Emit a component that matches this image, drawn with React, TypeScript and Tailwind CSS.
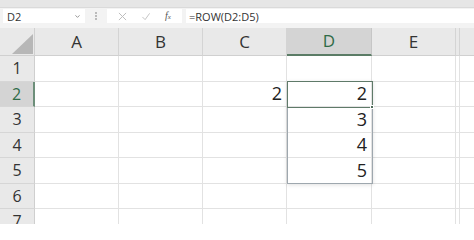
import { ChevronDown } from 'lucide-react';

const COLS = ['A', 'B', 'C', 'D', 'E'];
const ROWS = [1, 2, 3, 4, 5, 6, 7];

// values by "col+row"
const CELLS: Record<string, string> = {
  C2: '2',
  D2: '2',
  D3: '3',
  D4: '4',
  D5: '5',
};

const font = { fontFamily: '"Open Sans", "Noto Sans", sans-serif' };

function FormulaBar() {
  return (
    <div className="h-[20px] bg-[#f3f3f3] flex items-start pt-[1px]">
      <div className="ml-[3px] w-[82px] h-[14px] bg-white flex items-center justify-between px-[4px]">
        <span className="text-[11px] text-[#333] leading-none">D2</span>
        <ChevronDown size={7} strokeWidth={3} className="text-[#888]" />
      </div>
      <div className="w-[22px] h-[14px] flex flex-col items-center justify-center gap-[1.5px]">
        <span className="w-[1.5px] h-[1.5px] bg-[#bbb]" />
        <span className="w-[1.5px] h-[1.5px] bg-[#bbb]" />
        <span className="w-[1.5px] h-[1.5px] bg-[#bbb]" />
      </div>
      <div className="w-[75px] h-[14px] bg-white flex items-center justify-around px-[4px]">
        <svg width="9" height="9" viewBox="0 0 10 10" className="text-[#bdbdbd]">
          <path d="M1 1 L9 9 M9 1 L1 9" stroke="currentColor" strokeWidth="1.1" fill="none" />
        </svg>
        <svg width="10" height="9" viewBox="0 0 10 10" className="text-[#c4c4c4]">
          <path d="M1 5.5 L4 8.5 L9 1.5" stroke="currentColor" strokeWidth="1.1" fill="none" />
        </svg>
        <span className="text-[10px] italic text-[#555] leading-none" style={{ fontFamily: '"Liberation Serif", serif' }}>
          f<span className="text-[7px]">x</span>
        </span>
      </div>
      <div className="ml-[4px] flex-1 h-[14px] bg-white flex items-center pl-[3px]">
        <span className="text-[11px] text-[#333] leading-none">=ROW(D2:D5)</span>
      </div>
    </div>
  );
}

export default function App() {
  return (
    <div className="w-[474px] h-[224px] overflow-hidden bg-white relative" style={font}>
      <div className="h-[8px] bg-[#e6e6e6] border-b border-[#dadada]" />
      <FormulaBar />

      <div className="grid grid-cols-[35px_84px_84px_84px_85px_84px_4px_1fr] grid-rows-[28px_repeat(7,25.5px)]">
        {/* corner */}
        <div className="bg-[#e9e9e9] border-r border-b border-[#d0d0d0] relative">
          <svg width="21" height="20" viewBox="0 0 21 20" className="absolute left-[12px] top-[6px]">
            <path d="M21 0 L21 20 L0 20 Z" fill="#b7b7b7" />
          </svg>
        </div>
        {COLS.map(c => {
          const sel = c === 'D';
          return (
            <div
              key={c}
              className={`flex items-center justify-center text-[17px] border-r ${
                sel
                  ? 'bg-[#d4d4d4] text-[#2f6b47] border-[#c6c6c6] border-b-2 border-b-[#5b7c66]'
                  : 'bg-[#e9e9e9] text-[#333] border-[#d4d4d4] border-b border-b-[#d0d0d0]'
              }`}
            >
              {c}
            </div>
          );
        })}
        <div className="bg-[#e9e9e9] border-r border-b border-[#d4d4d4]" />
        <div className="bg-[#e9e9e9] border-b border-[#d0d0d0]" />

        {ROWS.map(r => {
          const sel = r === 2;
          return [
            <div
              key={`h${r}`}
              className={`flex items-center justify-center text-[16px] border-b border-[#d6d6d6] ${
                sel
                  ? 'bg-[#d4d4d4] text-[#2f6b47] border-r-2 border-r-[#6d8f7a]'
                  : 'bg-[#e9e9e9] text-[#333] border-r border-r-[#cfcfcf]'
              }`}
            >
              {r}
            </div>,
            ...COLS.map(c => (
              <div
                key={`${c}${r}`}
                className="flex items-center justify-end pr-[4px] text-[18px] text-[#222] border-r border-b border-[#e2e2e2]"
              >
                {CELLS[`${c}${r}`] ?? ''}
              </div>
            )),
            <div key={`x${r}`} className="border-r border-b border-[#e2e2e2]" />,
            <div key={`y${r}`} className="border-b border-[#e2e2e2]" />,
          ];
        })}
      </div>

      {/* selected range D2:D5 */}
      <div className="absolute left-[287px] top-[81px] w-[86px] h-[103px] border border-[#9ea7ae] shadow-[0_1px_4px_rgba(0,0,0,0.12)] pointer-events-none" />
      {/* active cell D2 */}
      <div className="absolute left-[287px] top-[81px] w-[86px] h-[27px] border-[1.5px] border-[#5f7a69] pointer-events-none" />
      <div className="absolute left-[370px] top-[105px] w-[4px] h-[4px] bg-[#4f6b59] border border-white pointer-events-none" />
    </div>
  );
}
